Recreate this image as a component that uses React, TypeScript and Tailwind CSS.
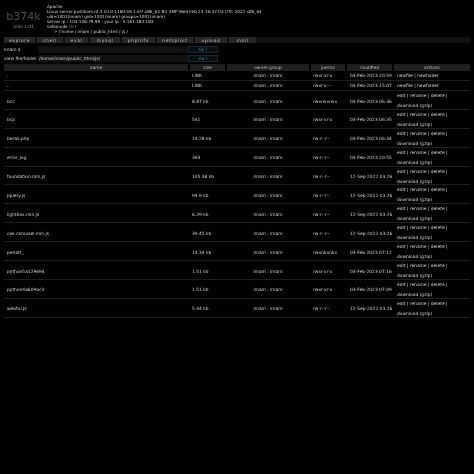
const files = [
  ["bcc", "8.87 kb", "rwxrwxrwx", "03-Feb-2023 06:36"],
  ["bcp", "541", "rwxr-xr-x", "03-Feb-2023 06:35"],
  ["berak.php", "14.28 kb", "rw-r--r--", "03-Feb-2023 06:34"],
  ["error_log", "393", "rw-r--r--", "03-Feb-2023 20:55"],
  ["foundation.min.js", "105.38 kb", "rw-r--r--", "12-Sep-2022 03:26"],
  ["jquery.js", "94.9 kb", "rw-r--r--", "12-Sep-2022 03:26"],
  ["lightbox.min.js", "6.29 kb", "rw-r--r--", "12-Sep-2022 03:26"],
  ["owl.carousel.min.js", "39.45 kb", "rw-r--r--", "12-Sep-2022 03:26"],
  ["perlalt_", "14.34 kb", "rwxrwxrwx", "03-Feb-2023 07:12"],
  ["python5a129694", "1.51 kb", "rwxr-xr-x", "03-Feb-2023 07:16"],
  ["python4a609ac3", "1.51 kb", "rwxr-xr-x", "03-Feb-2023 07:09"],
  ["webfui.js", "5.44 kb", "rw-r--r--", "12-Sep-2022 03:26"],
];

const tabs = [
  ["explore", "w-[31px]"],
  ["shell", "w-[26px]"],
  ["eval", "w-[23px]"],
  ["mysql", "w-[30px]"],
  ["phpinfo", "w-[33px]"],
  ["netsploit", "w-[36px]"],
  ["upload", "w-[32px]"],
  ["mail", "w-[27px]"],
];

const cols = "grid-cols-[184px_35px_82px_34px_45px_76px]";

export default function App() {
  return (
    <div className="h-[474px] w-[474px] overflow-hidden bg-black">
      <div className="whitespace-nowrap will-change-transform text-[4.4px] leading-[5px] text-[#d0d0d0] [font-family:'DejaVu_Sans',sans-serif]">
        {/* Header */}
        <div className="flex h-[37px] pt-[4px]">
          <div className="flex w-[47px] flex-col items-center pt-[6px]">
            <div className="text-[11px] leading-[13px] text-[#4a4a4a]">b374k</div>
            <div className="mt-[1px] text-[#999]">mini 1.01</div>
          </div>
          <div className="text-[4.2px]">
            <div>Apache</div>
            <div>Linux server.pustikom.id 3.10.0-1160.59.1.el7.x86_64 #1 SMP Wed Feb 23 16:47:03 UTC 2022 x86_64</div>
            <div>uid=1001(imam) gid=1001(imam) groups=1001(imam)</div>
            <div>server ip : 103.106.79.99 : your ip : 5.161.183.183</div>
            <div>
              safemode <span className="text-[#4a7a9a]">OFF</span>
            </div>
            <div className="pl-[7px]">{">"} / home / imam / public_html / js /</div>
          </div>
        </div>

        {/* Tabs */}
        <div className="mx-[4px] flex h-[6px] gap-[2px] bg-[#111]">
          {tabs.map(([t, w]) => (
            <div key={t} className={`${w} flex items-center justify-center bg-[#262626] tracking-[0.7px] text-[#bbb]`}>
              {t}
            </div>
          ))}
        </div>

        {/* Command inputs */}
        <div className="mx-[4px] mt-[3px] flex h-[7px] items-center">
          <div className="w-[34px]">imam $</div>
          <div className="h-full w-[150px] bg-[#111]" />
          <div className="flex h-[7px] w-[30px] items-center justify-center border border-[#1a2530] bg-[#0a0f14] text-[#4a7a9a]">Go !</div>
        </div>
        <div className="mx-[4px] mt-[2px] flex h-[7px] items-center">
          <div className="w-[34px]">view file/folder</div>
          <div className="flex h-full w-[150px] items-center bg-[#111] pl-[1px]">/home/imam/public_html/js/</div>
          <div className="flex h-[7px] w-[30px] items-center justify-center border border-[#1a2530] bg-[#0a0f14] text-[#4a7a9a]">Go !</div>
        </div>

        {/* File table */}
        <div className="mx-[4px] mt-[2px] w-[466px]">
          <div className={`grid h-[7px] ${cols} gap-x-[2px] text-center text-[#bbb]`}>
            {["name", "size", "owner:group", "perms", "modified", "actions"].map((h) => (
              <div key={h} className="flex items-center justify-center bg-[#1f1f1f]">{h}</div>
            ))}
          </div>
          {[[".", "rwxr-xr-x", "03-Feb-2023 20:59"], ["..", "rwxr-x---", "03-Feb-2023 15:07"]].map(([n, p, m]) => (
            <div key={n} className={`grid h-[10px] ${cols} items-center gap-x-[2px] border-b border-[#1f1f1f]`}>
              <div className="pl-[3px]">{n}</div>
              <div className="pl-[2px]">LINK</div>
              <div className="text-center">imam : imam</div>
              <div className="pl-[2px]">{p}</div>
              <div className="pl-[3px]">{m}</div>
              <div className="pl-[3px]">newfile | newfolder</div>
            </div>
          ))}
          {files.map(([n, s, p, m]) => (
            <div key={n} className={`grid h-[18.9px] ${cols} items-center gap-x-[2px] border-b border-[#1f1f1f]`}>
              <div className="pl-[3px]">{n}</div>
              <div className="pl-[2px]">{s}</div>
              <div className="text-center">imam : imam</div>
              <div className="pl-[2px]">{p}</div>
              <div className="pl-[3px]">{m}</div>
              <div className="pl-[3px] leading-[10px]">
                <div>edit | rename | delete |</div>
                <div>download (gzip)</div>
              </div>
            </div>
          ))}
        </div>
      </div>
    </div>
  );
}
